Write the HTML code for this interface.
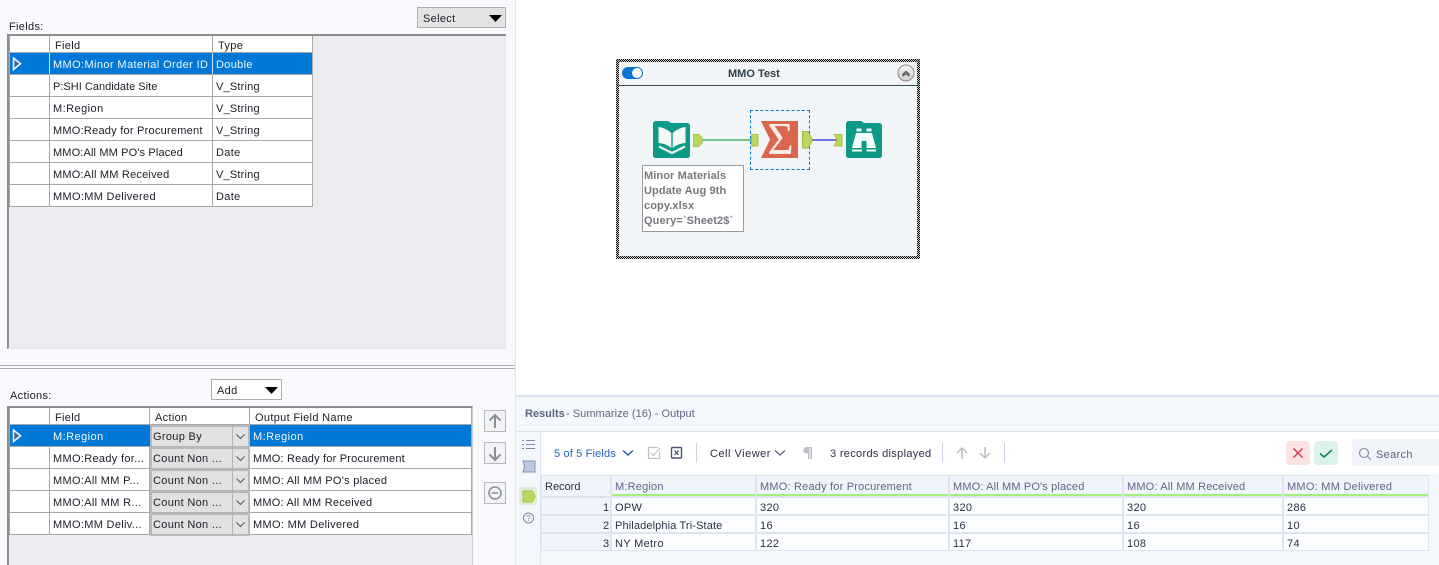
<!DOCTYPE html>
<html><head><meta charset="utf-8"><style>
html,body{margin:0;padding:0;background:#fff}
#p{position:relative;width:1439px;height:565px;overflow:hidden;background:#fff;font-family:"Liberation Sans",sans-serif;font-size:11px;color:#1c1c28;letter-spacing:.32px}
#p div,#p span.t{position:absolute;box-sizing:border-box}
.t{white-space:nowrap;line-height:14px;margin-top:2px}
.w{color:#f2f7fc}
.h{color:#5c6684}
.d{color:#2c2f45}
.c{background:#e1e1e1;border:2px solid #b8b8b8;width:100px;height:23px;left:150px}
</style></head><body><div id="p">

<!-- left panel -->
<div style="left:0;top:0;width:515px;height:565px;background:#f9fafd"></div>
<div style="left:515px;top:0;width:1px;height:565px;background:#dfe4f0"></div>
<div style="left:0;top:365px;width:515px;height:1px;background:#a9abae"></div>
<div style="left:0;top:368px;width:515px;height:1px;background:#a9abae"></div>

<span class="t" style="left:9px;top:18px">Fields:</span>
<div style="left:417px;top:7px;width:89px;height:21px;background:#e3e3e3;border:1px solid #adadad"></div>
<span class="t" style="left:423px;top:10px">Select</span>
<svg style="position:absolute;left:489px;top:15px" width="13" height="7"><path d="M0 0H13L6.500 7Z" fill="#000"/></svg>

<!-- fields grid -->
<div style="left:7px;top:34px;width:499px;height:315px;background:#ebecf0;border-top:2px solid #8e8e8e;border-left:2px solid #8e8e8e;border-bottom:1px solid #e4e4e8"></div>
<div style="left:9px;top:36px;width:304px;height:171px;background:#fff;border:1px solid #a8a8a8;border-top:0"></div>
<div style="left:9px;top:52px;width:304px;height:1px;background:#a8a8a8"></div>
<div style="left:9px;top:74px;width:304px;height:1px;background:#a8a8a8"></div>
<div style="left:9px;top:96px;width:304px;height:1px;background:#a8a8a8"></div>
<div style="left:9px;top:118px;width:304px;height:1px;background:#a8a8a8"></div>
<div style="left:9px;top:140px;width:304px;height:1px;background:#a8a8a8"></div>
<div style="left:9px;top:162px;width:304px;height:1px;background:#a8a8a8"></div>
<div style="left:9px;top:184px;width:304px;height:1px;background:#a8a8a8"></div>
<div style="left:49px;top:36px;width:1px;height:171px;background:#a8a8a8"></div>
<div style="left:212px;top:36px;width:1px;height:171px;background:#a8a8a8"></div>
<div style="left:10px;top:53px;width:302px;height:21px;background:#0078d7"></div>
<div style="left:49px;top:53px;width:1px;height:21px;background:#cfe4f7"></div>
<div style="left:212px;top:53px;width:1px;height:21px;background:#cfe4f7"></div>
<svg style="position:absolute;left:12px;top:57px" width="11" height="14"><path d="M1.500 1V12.500L8.500 6.700Z" fill="#3d6a99" stroke="#eef3f8" stroke-width="1.600"/></svg>

<span class="t" style="left:55px;top:37px">Field</span>
<span class="t" style="left:218px;top:37px">Type</span>
<span class="t w" style="left:53px;top:56px;letter-spacing:.39px">MMO:Minor Material Order ID</span>
<span class="t w" style="left:216px;top:56px">Double</span>
<span class="t" style="left:53px;top:78px;letter-spacing:.02px">P:SHI Candidate Site</span>
<span class="t" style="left:216px;top:78px;letter-spacing:.2px">V_String</span>
<span class="t" style="left:53px;top:100px;letter-spacing:.45px">M:Region</span>
<span class="t" style="left:216px;top:100px;letter-spacing:.2px">V_String</span>
<span class="t" style="left:53px;top:122px;letter-spacing:.24px">MMO:Ready for Procurement</span>
<span class="t" style="left:216px;top:122px;letter-spacing:.2px">V_String</span>
<span class="t" style="left:53px;top:144px;letter-spacing:.14px">MMO:All MM PO's Placed</span>
<span class="t" style="left:216px;top:144px">Date</span>
<span class="t" style="left:53px;top:166px;letter-spacing:.21px">MMO:All MM Received</span>
<span class="t" style="left:216px;top:166px;letter-spacing:.2px">V_String</span>
<span class="t" style="left:53px;top:188px">MMO:MM Delivered</span>
<span class="t" style="left:216px;top:188px">Date</span>

<!-- actions -->
<span class="t" style="left:10px;top:387px">Actions:</span>
<div style="left:211px;top:379px;width:71px;height:21px;background:#fff;border:1px solid #adadad"></div>
<span class="t" style="left:217px;top:382px">Add</span>
<svg style="position:absolute;left:265px;top:387px" width="13" height="7"><path d="M0 0H13L6.500 7Z" fill="#000"/></svg>

<div style="left:7px;top:406px;width:466px;height:159px;background:#ebecf0;border-top:2px solid #8e8e8e;border-left:2px solid #8e8e8e;border-right:1px solid #d0d0d4"></div>
<div style="left:9px;top:408px;width:463px;height:127px;background:#fff;border:1px solid #a8a8a8;border-top:0"></div>
<div style="left:9px;top:424px;width:463px;height:1px;background:#a8a8a8"></div>
<div style="left:9px;top:446px;width:463px;height:1px;background:#a8a8a8"></div>
<div style="left:9px;top:468px;width:463px;height:1px;background:#a8a8a8"></div>
<div style="left:9px;top:490px;width:463px;height:1px;background:#a8a8a8"></div>
<div style="left:9px;top:512px;width:463px;height:1px;background:#a8a8a8"></div>
<div style="left:49px;top:408px;width:1px;height:127px;background:#a8a8a8"></div>
<div style="left:149px;top:408px;width:1px;height:127px;background:#a8a8a8"></div>
<div style="left:249px;top:408px;width:1px;height:127px;background:#a8a8a8"></div>
<div style="left:10px;top:425px;width:461px;height:21px;background:#0078d7"></div>
<svg style="position:absolute;left:12px;top:429px" width="11" height="14"><path d="M1.500 1V12.500L8.500 6.700Z" fill="#3d6a99" stroke="#eef3f8" stroke-width="1.600"/></svg>

<div class="c" style="top:425px"></div>
<div class="c" style="top:447px"></div>
<div class="c" style="top:469px"></div>
<div class="c" style="top:491px"></div>
<div class="c" style="top:513px"></div>
<div style="left:232px;top:425px;width:1px;height:110px;background:#b5b5b5"></div>
<svg style="position:absolute;left:235px;top:425px" width="11" height="110" fill="none" stroke="#555" stroke-width="1"><path d="M1.500 9.500L5.500 13.500L9.500 9.500M1.500 31.500L5.500 35.500L9.500 31.500M1.500 53.500L5.500 57.500L9.500 53.500M1.500 75.500L5.500 79.500L9.500 75.500M1.500 97.500L5.500 101.500L9.500 97.500"/></svg>

<span class="t" style="left:55px;top:409px">Field</span>
<span class="t" style="left:155px;top:409px">Action</span>
<span class="t" style="left:255px;top:409px">Output Field Name</span>

<span class="t w" style="left:53px;top:428px;letter-spacing:.45px">M:Region</span>
<span class="t" style="left:153px;top:428px">Group By</span>
<span class="t w" style="left:253px;top:428px;letter-spacing:.45px">M:Region</span>
<span class="t" style="left:53px;top:450px">MMO:Ready for...</span>
<span class="t" style="left:153px;top:450px">Count Non ...</span>
<span class="t" style="left:253px;top:450px;letter-spacing:.2px">MMO: Ready for Procurement</span>
<span class="t" style="left:53px;top:472px">MMO:All MM P...</span>
<span class="t" style="left:153px;top:472px">Count Non ...</span>
<span class="t" style="left:253px;top:472px;letter-spacing:.27px">MMO: All MM PO's placed</span>
<span class="t" style="left:53px;top:494px">MMO:All MM R...</span>
<span class="t" style="left:153px;top:494px">Count Non ...</span>
<span class="t" style="left:253px;top:494px;letter-spacing:.22px">MMO: All MM Received</span>
<span class="t" style="left:53px;top:516px">MMO:MM Deliv...</span>
<span class="t" style="left:153px;top:516px">Count Non ...</span>
<span class="t" style="left:253px;top:516px">MMO: MM Delivered</span>

<!-- side buttons -->
<div style="left:484px;top:410px;width:22px;height:22px;background:#f2f3f5;border:1px solid #b8b8b8"></div>
<div style="left:484px;top:442px;width:22px;height:22px;background:#f2f3f5;border:1px solid #b8b8b8"></div>
<div style="left:484px;top:482px;width:22px;height:22px;background:#f2f3f5;border:1px solid #b8b8b8"></div>
<svg style="position:absolute;left:484px;top:410px" width="22" height="94" fill="none" stroke="#8a8f96" stroke-width="2"><path d="M11 18V5M5.500 10.500L11 5L16.500 10.500"/><path d="M11 37V50M5.500 44.500L11 50L16.500 44.500"/><circle cx="11" cy="83" r="6" stroke-width="1.500"/><path d="M7.500 83H14.500" stroke-width="1.500"/></svg>

<!-- container -->
<div style="left:616px;top:59px;width:304px;height:200px;background:repeating-conic-gradient(#0c0c0c 0 25%,#c8c8c8 0 50%) 0 0/2px 2px"></div>
<div style="left:619px;top:62px;width:298px;height:194px;background:#f1f5f7"></div>
<div style="left:619px;top:85px;width:298px;height:1px;background:#2f4a55"></div>
<div style="left:622px;top:67px;width:21px;height:12px;border-radius:6px;background:#0a74d6"></div>
<div style="left:632px;top:68px;width:10px;height:10px;border-radius:5px;background:#fff"></div>
<span class="t" style="left:728px;top:65px;font-weight:bold;color:#2f3f4a;letter-spacing:0">MMO Test</span>
<svg style="position:absolute;left:897px;top:64px" width="18" height="18"><defs><linearGradient id="g" x1="0" y1="0" x2="0" y2="1"><stop offset="0" stop-color="#f4f4f4"/><stop offset="1" stop-color="#cfcfd4"/></linearGradient></defs><circle cx="9" cy="9" r="8" fill="url(#g)" stroke="#8a8a8a"/><path d="M5.500 10.500L9 7.500L12.500 10.500M5.500 12L9 9.500L12.500 12" fill="none" stroke="#444" stroke-width="1.100"/></svg>

<!-- selection box -->
<div style="left:750px;top:110px;width:60px;height:60px;border:1px dashed #0a78d0"></div>

<svg style="position:absolute;left:640px;top:110px" width="260" height="60">
 <path d="M60 30H112" stroke="#7cc08e" stroke-width="2"/>
 <path d="M172 30H198" stroke="#6f72e6" stroke-width="2"/>
 <!-- input book icon -->
 <path d="M13 14Q13 11 16 11H28L31 13H47Q50 13 50 16V45Q50 48 47 48H16Q13 48 13 45Z" fill="#0a9a86"/>
 <path d="M18.500 17Q26 18 31.300 23V38Q26 33.500 18.500 33ZM45.500 17Q38 18 32.700 23V38Q38 33.500 45.500 33Z" fill="#f4faf8"/>
 <path d="M19 36.500L32 43L45 36.500" fill="none" stroke="#f4faf8" stroke-width="2.200"/>
 <!-- anchors -->
 <path d="M53.500 24.500H59L62 28V33L59 36.500H53.500Z" fill="#bcd75c" stroke="#a3c24e"/>
 <path d="M111.500 24.500H118V36H111.500Z" fill="#bcd75c" stroke="#a3c24e"/>
 <path d="M162.500 21.500H168L172 29V31L168 38H162.500Z" fill="#bcd75c" stroke="#9ebd4c"/>
 <path d="M194.500 24.500H202V36H194.500L197 30Z" fill="#bcd75c" stroke="#a3c24e"/>
 <!-- summarize -->
 <path d="M121 11H158V48H121L130 29.500Z" fill="#d9664d"/>
 <text x="140.500" y="44" text-anchor="middle" font-family="Liberation Serif,serif" font-size="45" fill="#fbeee9" letter-spacing="0">Σ</text>
 <!-- browse icon -->
 <path d="M206 14Q206 11 209 11H221L224 13H239Q242 13 242 16V45Q242 48 239 48H209Q206 48 206 45Z" fill="#0a9a86"/>
 <path d="M216.500 18.500H221.500V21.500H216.500ZM226.500 18.500H231.500V21.500H226.500Z" fill="#f4faf8"/>
 <path d="M216 23H232L236 38H226.500V31H221.500V38H212Z" fill="#f4faf8"/>
 <path d="M212 40.500H222M226.500 40.500H236" stroke="#f4faf8" stroke-width="2"/>
</svg>

<!-- annotation -->
<div style="left:642px;top:165px;width:102px;height:67px;background:#fff;border:1px solid #9a9a9a"></div>
<span class="t" style="left:644px;top:167px;font-weight:bold;color:#77787f;letter-spacing:.1px;line-height:15px">Minor Materials<br>Update Aug 9th<br>copy.xlsx<br>Query=`Sheet2$`</span>

<!-- results -->
<div style="left:516px;top:395px;width:923px;height:170px;background:#f4f7fc;border-top:2px solid #dde4f1"></div>
<span class="t" style="left:525px;top:405px;font-weight:bold;color:#5a6480;letter-spacing:0">Results</span>
<span class="t h" style="left:566px;top:405px;letter-spacing:.04px">- Summarize (16) - Output</span>
<div style="left:516px;top:431px;width:923px;height:1px;background:#dde4f1"></div>
<div style="left:541px;top:432px;width:898px;height:42px;background:#fff"></div>
<div style="left:540px;top:432px;width:1px;height:133px;background:#dde4f1"></div>

<!-- results side icons -->
<div style="left:519px;top:487px;width:18px;height:18px;border-radius:3px;background:#dcefd6"></div>
<svg style="position:absolute;left:519px;top:437px" width="20" height="92" fill="none">
 <path d="M7 3.500H16M7 7.500H16M7 11.500H16" stroke="#7c88a8"/><path d="M3 3.500H5M3 7.500H5M3 11.500H5" stroke="#7c88a8"/>
 <path d="M4 24H16V35H4L5.500 29.500Z" fill="#bcc9e3" stroke="#8593b5"/>
 <path d="M4 54H13L16 59V60L13 65H4Z" fill="#bcd75c" stroke="#a3c24e"/>
 <circle cx="9.500" cy="81" r="5" stroke="#7c88a8"/>
 <text x="9.500" y="84" text-anchor="middle" font-size="8" fill="#7c88a8" letter-spacing="0" font-family="Liberation Sans,sans-serif">?</text>
</svg>

<!-- toolbar -->
<span class="t" style="left:554px;top:445px;color:#1f62b5;letter-spacing:.15px">5 of 5 Fields</span>
<svg style="position:absolute;left:622px;top:449px" width="12" height="8" fill="none"><path d="M1 1.500L6 6L11 1.500" stroke="#2b5c9e" stroke-width="1.500"/></svg>
<svg style="position:absolute;left:647px;top:446px" width="40" height="14" fill="none">
 <path d="M11 1.500H1.500V12.500H12.500V6" stroke="#bcc0c8" stroke-width="1.200"/><path d="M3.500 6.500L6.500 9.500L13 2" stroke="#bcc0c8" stroke-width="1.200"/>
 <rect x="24.500" y="1.500" width="10" height="10.500" rx="1" stroke="#4a5674" stroke-width="1.400"/><path d="M27.500 4.500L31.500 9M31.500 4.500L27.500 9" stroke="#4a5674" stroke-width="1.300"/>
</svg>
<div style="left:696px;top:443px;width:1px;height:20px;background:#c8d2e4"></div>
<span class="t d" style="left:710px;top:445px;letter-spacing:.5px">Cell Viewer</span>
<svg style="position:absolute;left:774px;top:449px" width="12" height="8" fill="none"><path d="M1 1.500L6 6L11 1.500" stroke="#5a6480" stroke-width="1.300"/></svg>
<svg style="position:absolute;left:802px;top:446px" width="12" height="14"><path d="M10 1H4.500A3 3 0 0 0 4.500 7.500H6V13H7.500V2.500H8.500V13H10Z" fill="#bcc0c8"/></svg>
<span class="t d" style="left:830px;top:445px">3 records displayed</span>
<div style="left:942px;top:443px;width:1px;height:20px;background:#c8d2e4"></div>
<svg style="position:absolute;left:955px;top:446px" width="36" height="14" fill="none" stroke="#b9bdc6" stroke-width="1.500"><path d="M7 13V2M2 7L7 2L12 7"/><path d="M30 1V12M25 7L30 12L35 7"/></svg>
<div style="left:1004px;top:443px;width:1px;height:20px;background:#c8d2e4"></div>

<div style="left:1286px;top:441px;width:24px;height:24px;border-radius:4px;background:#fde2e4"></div>
<div style="left:1314px;top:441px;width:24px;height:24px;border-radius:4px;background:#dcf3ec"></div>
<svg style="position:absolute;left:1286px;top:441px" width="52" height="24" fill="none"><path d="M7.500 7.500L16.500 16.500M16.500 7.500L7.500 16.500" stroke="#d83a4c" stroke-width="1.500"/><path d="M34 12.500L38 16L46 9" stroke="#16875f" stroke-width="1.600"/></svg>
<div style="left:1352px;top:439px;width:87px;height:27px;border-radius:4px 0 0 4px;background:#f1f4f9"></div>
<svg style="position:absolute;left:1358px;top:447px" width="14" height="14" fill="none" stroke="#7f8ba6" stroke-width="1.100"><circle cx="6" cy="6" r="4.500"/><path d="M9.500 9.500L13 13"/></svg>
<span class="t h" style="left:1376px;top:446px">Search</span>

<!-- data grid -->
<div style="left:541px;top:475px;width:888px;height:76px;background:#fcfdff;border:1px solid #dde4f1"></div>
<div style="left:542px;top:476px;width:886px;height:22px;background:#f1f5fb"></div>
<div style="left:542px;top:498px;width:68px;height:52px;background:#f1f5fb"></div>
<div style="left:611px;top:494px;width:817px;height:2px;background:#a3f07f"></div>
<div style="left:542px;top:496px;width:886px;height:2px;background:#dde4f1"></div>
<div style="left:542px;top:514px;width:886px;height:2px;background:#dde4f1"></div>
<div style="left:542px;top:532px;width:886px;height:2px;background:#dde4f1"></div>
<div style="left:610px;top:475px;width:2px;height:76px;background:#dde4f1"></div>
<div style="left:755px;top:475px;width:2px;height:76px;background:#dde4f1"></div>
<div style="left:948px;top:475px;width:2px;height:76px;background:#dde4f1"></div>
<div style="left:1122px;top:475px;width:2px;height:76px;background:#dde4f1"></div>
<div style="left:1282px;top:475px;width:2px;height:76px;background:#dde4f1"></div>

<span class="t d" style="left:545px;top:478px;letter-spacing:0">Record</span>
<span class="t h" style="left:615px;top:478px;letter-spacing:.2px">M:Region</span>
<span class="t h" style="left:760px;top:478px;letter-spacing:.2px">MMO: Ready for Procurement</span>
<span class="t h" style="left:953px;top:478px;letter-spacing:.15px">MMO: All MM PO's placed</span>
<span class="t h" style="left:1127px;top:478px;letter-spacing:.17px">MMO: All MM Received</span>
<span class="t h" style="left:1287px;top:478px;letter-spacing:.26px">MMO: MM Delivered</span>

<span class="t d" style="left:603px;top:499px">1</span>
<span class="t d" style="left:615px;top:499px">OPW</span>
<span class="t d" style="left:760px;top:499px">320</span>
<span class="t d" style="left:953px;top:499px">320</span>
<span class="t d" style="left:1127px;top:499px">320</span>
<span class="t d" style="left:1287px;top:499px">286</span>

<span class="t d" style="left:603px;top:517px">2</span>
<span class="t d" style="left:615px;top:517px;letter-spacing:.13px">Philadelphia Tri-State</span>
<span class="t d" style="left:760px;top:517px">16</span>
<span class="t d" style="left:953px;top:517px">16</span>
<span class="t d" style="left:1127px;top:517px">16</span>
<span class="t d" style="left:1287px;top:517px">10</span>

<span class="t d" style="left:603px;top:535px">3</span>
<span class="t d" style="left:615px;top:535px">NY Metro</span>
<span class="t d" style="left:760px;top:535px">122</span>
<span class="t d" style="left:953px;top:535px">117</span>
<span class="t d" style="left:1127px;top:535px">108</span>
<span class="t d" style="left:1287px;top:535px">74</span>

</div></body></html>
